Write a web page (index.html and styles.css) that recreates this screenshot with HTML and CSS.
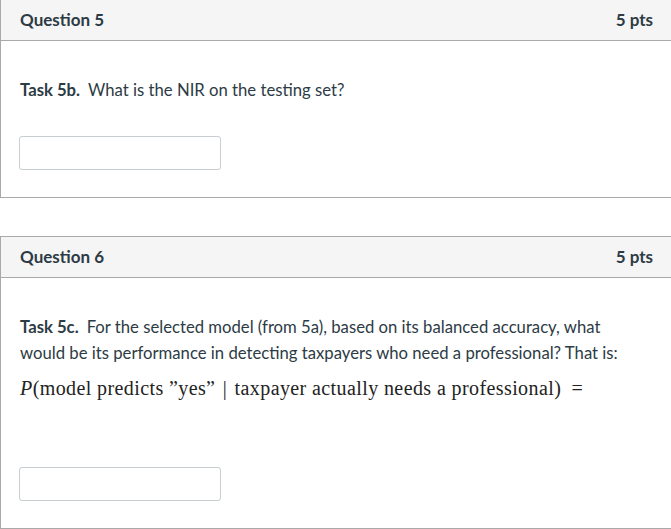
FILE: index.html
```html
<!DOCTYPE html>
<html lang="en">
<head>
<meta charset="utf-8">
<title>Quiz</title>
<link rel="stylesheet" href="styles.css">
</head>
<body>
<div class="quiz">
  <section class="card">
    <header class="card-header">
      <h2 class="q-title">Question 5</h2>
      <span class="q-pts">5 pts</span>
    </header>
    <div class="card-body">
      <p class="text"><strong class="task">Task 5b.</strong>What is the NIR on the testing set?</p>
      <input class="answer" type="text" aria-label="Answer">
    </div>
  </section>
  <section class="card">
    <header class="card-header">
      <h2 class="q-title">Question 6</h2>
      <span class="q-pts">5 pts</span>
    </header>
    <div class="card-body">
      <p class="text"><strong class="task">Task 5c.</strong>For the selected model (from 5a), based on its balanced accuracy, what would be its performance in detecting taxpayers who need a professional? That is:</p>
      <p class="math"><i>P</i>(model predicts ”yes” <span class="bar">|</span> taxpayer actually needs a professional) <span class="eq">=</span></p>
      <input class="answer answer-low" type="text" aria-label="Answer">
    </div>
  </section>
</div>
</body>
</html>
```

FILE: styles.css
```css
html, body {
  margin: 0;
  padding: 0;
  background: #ffffff;
}
body {
  font-family: Lato, "Open Sans", sans-serif;
  color: #2d3b45;
  overflow: hidden;
}
.quiz {
  margin-top: -1px;
}
.card {
  border: 1px solid #a9a9a9;
  border-right: 0;
  margin-bottom: 38px;
}
.card-header {
  height: 41px;
  box-sizing: border-box;
  display: flex;
  align-items: center;
  justify-content: space-between;
  padding: 0 18px 2px 19px;
  background: #f5f5f5;
  border-bottom: 1px solid #a9a9a9;
}
.q-title {
  margin: 0;
  font-size: 17px;
  font-weight: 700;
}
.q-pts {
  font-size: 17px;
  font-weight: 700;
}
.card-body {
  padding: 36px 18px 27px 18px;
}
.text {
  margin: 0;
  font-size: 16.7px;
  line-height: 26px;
  max-width: 620px;
  padding-left: 1px;
}
.task {
  margin-right: 8px;
}
.math {
  margin: 9px 0 0;
  padding-left: 1px;
  font-family: "Liberation Serif", "Times New Roman", serif;
  font-size: 20px;
  letter-spacing: 0.4px;
  line-height: 26px;
  color: #222;
}
.math .bar {
  padding: 0 2px;
}
.math .eq {
  padding-left: 5px;
}
.answer {
  display: block;
  margin-top: 33px;
  width: 202px;
  height: 34px;
  box-sizing: border-box;
  border: 1px solid #c7cdd1;
  border-radius: 3px;
  background: #fff;
  padding: 0 8px;
  font: inherit;
}
.answer-low {
  margin-top: 66px;
}
```
